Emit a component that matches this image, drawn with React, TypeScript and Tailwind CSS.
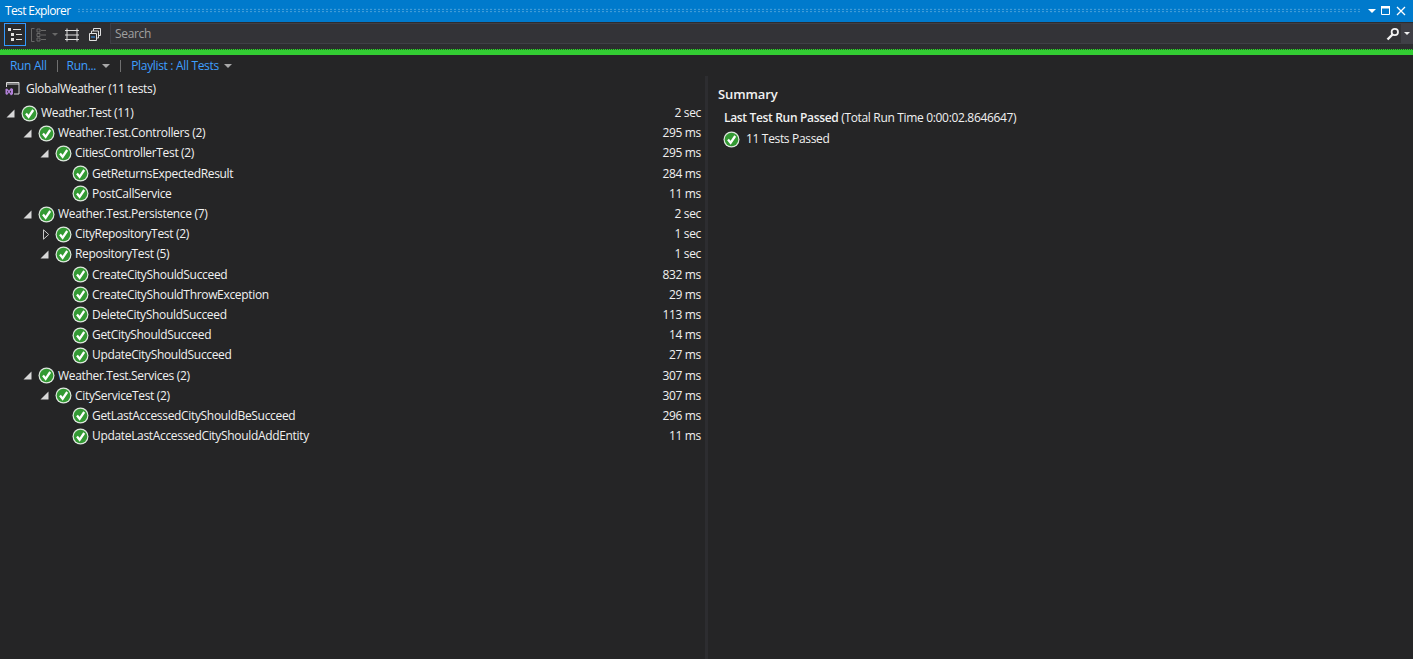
import React from 'react';

const font = 'font-["Open_Sans","Liberation_Sans",sans-serif]';

type Row = { name: string; time: string; level: number; toggle?: 'open' | 'closed' };

const rows: Row[] = [
  { name: 'Weather.Test (11)', time: '2 sec', level: 0, toggle: 'open' },
  { name: 'Weather.Test.Controllers (2)', time: '295 ms', level: 1, toggle: 'open' },
  { name: 'CitiesControllerTest (2)', time: '295 ms', level: 2, toggle: 'open' },
  { name: 'GetReturnsExpectedResult', time: '284 ms', level: 3 },
  { name: 'PostCallService', time: '11 ms', level: 3 },
  { name: 'Weather.Test.Persistence (7)', time: '2 sec', level: 1, toggle: 'open' },
  { name: 'CityRepositoryTest (2)', time: '1 sec', level: 2, toggle: 'closed' },
  { name: 'RepositoryTest (5)', time: '1 sec', level: 2, toggle: 'open' },
  { name: 'CreateCityShouldSucceed', time: '832 ms', level: 3 },
  { name: 'CreateCityShouldThrowException', time: '29 ms', level: 3 },
  { name: 'DeleteCityShouldSucceed', time: '113 ms', level: 3 },
  { name: 'GetCityShouldSucceed', time: '14 ms', level: 3 },
  { name: 'UpdateCityShouldSucceed', time: '27 ms', level: 3 },
  { name: 'Weather.Test.Services (2)', time: '307 ms', level: 1, toggle: 'open' },
  { name: 'CityServiceTest (2)', time: '307 ms', level: 2, toggle: 'open' },
  { name: 'GetLastAccessedCityShouldBeSucceed', time: '296 ms', level: 3 },
  { name: 'UpdateLastAccessedCityShouldAddEntity', time: '11 ms', level: 3 },
];

const PassIcon = () => (
  <svg width="17" height="17" viewBox="0 0 17 17" className="shrink-0">
    <circle cx="8.5" cy="8.5" r="8" fill="#dfe8df" />
    <circle cx="8.5" cy="8.5" r="6.8" fill="#339933" />
    <path d="M5 8.6 L7.6 11.8 L12.2 5" fill="none" stroke="#fff" strokeWidth="2.3" />
  </svg>
);

const Toggle = ({ kind }: { kind?: 'open' | 'closed' }) => {
  if (kind === 'open') {
    return (
      <svg width="9" height="9" viewBox="0 0 9 9" className="shrink-0">
        <path d="M8.5 0.5 V8.5 H0.5 Z" fill="#d8d8d8" />
      </svg>
    );
  }
  if (kind === 'closed') {
    return (
      <svg width="9" height="11" viewBox="0 0 9 11" className="shrink-0 translate-x-[2px]">
        <path d="M1.5 0.8 L6.7 5.5 L1.5 10.2 Z" fill="none" stroke="#c8c8c8" strokeWidth="1" />
      </svg>
    );
  }
  return <span className="w-[9px] shrink-0" />;
};

const Caret = () => (
  <svg width="8" height="4" viewBox="0 0 8 4" className="shrink-0">
    <path d="M0 0 H8 L4 4 Z" fill="#a8a8a8" />
  </svg>
);

const TreeRow = ({ row }: { row: Row }) => {
  const indent = ['pl-[6px]', 'pl-[23px]', 'pl-[40px]', 'pl-[57px]'][row.level];
  return (
    <div className={`flex h-[20.2px] items-center justify-between pr-[4px] ${indent}`}>
      <div className="flex items-center">
        <Toggle kind={row.toggle} />
        <span className="ml-[6px]"><PassIcon /></span>
        <span className="ml-[3px] whitespace-nowrap text-[#f1f1f1]">{row.name}</span>
      </div>
      <span className="whitespace-nowrap text-[#f1f1f1]">{row.time}</span>
    </div>
  );
};

export default function App() {
  return (
    <div className={`${font} flex h-[659px] w-[1413px] flex-col overflow-hidden bg-[#252526] text-[12px] tracking-[-0.33px]`}>
      {/* title bar */}
      <div className="flex h-[22px] items-center bg-[#007acc] pl-[5px] pr-[7px] pb-[1px] text-white">
        <span className="whitespace-nowrap tracking-[-0.62px]">Test Explorer</span>
        <div className="ml-[6px] h-[5px] flex-1 bg-[radial-gradient(#5aa9dd_1px,transparent_1px)] bg-[length:4px_2.5px]" />
        <div className="ml-[6px] flex items-center">
          <svg width="8" height="4" viewBox="0 0 8 4"><path d="M0 0 H8 L4 4 Z" fill="#fff" /></svg>
          <svg width="9" height="9" viewBox="0 0 9 9" className="ml-[5px]"><path d="M0.5 0.5 H8.5 V8.5 H0.5 Z" fill="none" stroke="#fff" /><path d="M0 0 H9 V2.5 H0 Z" fill="#fff" /></svg>
          <svg width="10" height="10" viewBox="0 0 10 10" className="ml-[6px]"><path d="M1 1 L9 9 M9 1 L1 9" stroke="#fff" strokeWidth="1.3" /></svg>
        </div>
      </div>

      {/* toolbar */}
      <div className="flex h-[27px] items-start bg-[#2d2d30] pl-[4px] pt-[1px]">
        <div className="flex h-[23px] w-[22px] items-center justify-center border border-[#3399ff] bg-[#2a2a2c]">
          <svg width="15" height="14" viewBox="0 0 15 14">
            <path d="M0 0 H3 V3 H0 Z M3 5 H6 V8 H3 Z M3 10 H6 V13 H3 Z" fill="#e0e0e0" />
            <path d="M5 1.5 H13 M8 6.5 H14 M8 11.5 H14" stroke="#e0e0e0" strokeWidth="1" />
          </svg>
        </div>
        <div className="flex h-[23px] items-center">
          <svg width="16" height="14" viewBox="0 0 16 14" className="ml-[5px]">
            <path d="M3.5 0.5 H0.5 V13.5 H3.5 M6 1 H9 V4 H6 Z M6 5.5 H9 V8.5 H6 Z M6 10 H9 V13 H6 Z M10 2.5 H15 M10 7 H15 M10 11.5 H15" fill="none" stroke="#686868" />
          </svg>
          <svg width="6" height="3" viewBox="0 0 6 3" className="ml-[5px]"><path d="M0 0 H6 L3 3 Z" fill="#686868" /></svg>
          <svg width="14" height="14" viewBox="0 0 14 14" className="ml-[7px]">
            <path d="M0 2.5 H14 M0 7 H14 M0 11.5 H14 M2 0.5 V13.5 M12 0.5 V13.5" stroke="#e0e0e0" strokeWidth="1" fill="none" />
          </svg>
          <svg width="12" height="13" viewBox="0 0 12 13" className="ml-[10px]">
            <path d="M0.5 5.5 H7.5 V12.5 H0.5 Z M2.5 5.5 V3 H9.5 V10 H7.5 M4.5 3 V0.5 H11.5 V7.5 H9.5" fill="none" stroke="#e0e0e0" />
            <path d="M2 9 H6" stroke="#3399ff" />
          </svg>
        </div>
        <div className="ml-[9px] flex h-[21px] flex-1 items-center border border-[#3f3f46] border-r-0 bg-[#333337] pl-[4px]">
          <span className="text-[#a0a0a0]">Search</span>
          <div className="ml-auto flex h-full items-center">
            <svg width="14" height="14" viewBox="0 0 14 14" className="mr-[1px]">
              <circle cx="8.8" cy="5" r="3.2" fill="none" stroke="#f1f1f1" strokeWidth="1.8" />
              <path d="M6.5 7.5 L1.5 12.5" stroke="#f1f1f1" strokeWidth="2.4" />
            </svg>
            <div className="flex h-full w-[12px] items-center justify-center bg-[#3f3f46]">
              <svg width="6" height="3" viewBox="0 0 6 3"><path d="M0 0 H6 L3 3 Z" fill="#f1f1f1" /></svg>
            </div>
          </div>
        </div>
      </div>

      {/* result bar */}
      <div className="h-[6px] border-t border-dotted border-[#1f5f1f] bg-[#33cc33]" />

      {/* run bar */}
      <div className="flex h-[21px] items-center pl-[10px] text-[#3e9fff]">
        <span>Run All</span>
        <span className="ml-[10px] h-[12px] w-[1px] bg-[#707070]" />
        <span className="ml-[9px]">Run...</span>
        <span className="ml-[6px]"><Caret /></span>
        <span className="ml-[10px] h-[12px] w-[1px] bg-[#707070]" />
        <span className="ml-[10px]">Playlist : All Tests</span>
        <span className="ml-[5px]"><Caret /></span>
      </div>

      {/* panels */}
      <div className="flex min-h-0 flex-1">
        <div className="w-[705px] shrink-0">
          <div className="flex h-[27px] items-center pl-[5px] pb-[1px] text-[#f1f1f1]">
            <svg width="15" height="14" viewBox="0 0 15 14" className="shrink-0">
              <path d="M1.5 5 V0.5 H14 V12 H9" fill="none" stroke="#d8d8d8" />
              <path d="M1.5 2 H14" stroke="#d8d8d8" />
              <path d="M0.5 7 L2 6.5 L4 8.5 L6 6 L8 7 V12 L6 13.5 L4 10.5 L2 13 L0.5 12 Z" fill="#b180d7" />
              <path d="M6 8.5 V11 L4.8 9.8 Z M2 8.5 V11 L3 9.8 Z" fill="#252526" />
            </svg>
            <span className="ml-[6px]">GlobalWeather (11 tests)</span>
          </div>
          {rows.map((row) => (
            <TreeRow key={row.name} row={row} />
          ))}
        </div>
        <div className="w-[3px] shrink-0 bg-[#2d2d30]" />
        <div className="flex-1 pl-[10px] text-[#f1f1f1]">
          <div className="mt-[8px] text-[13px] font-semibold leading-[20px] tracking-[-0.1px]">Summary</div>
          <div className="ml-[6px] mt-[4px] leading-[20px]">
            <span className="font-semibold">Last Test Run Passed</span> (Total Run Time 0:00:02.8646647)
          </div>
          <div className="ml-[5px] mt-[2px] flex items-center">
            <PassIcon />
            <span className="ml-[6px]">11 Tests Passed</span>
          </div>
        </div>
      </div>
    </div>
  );
}
